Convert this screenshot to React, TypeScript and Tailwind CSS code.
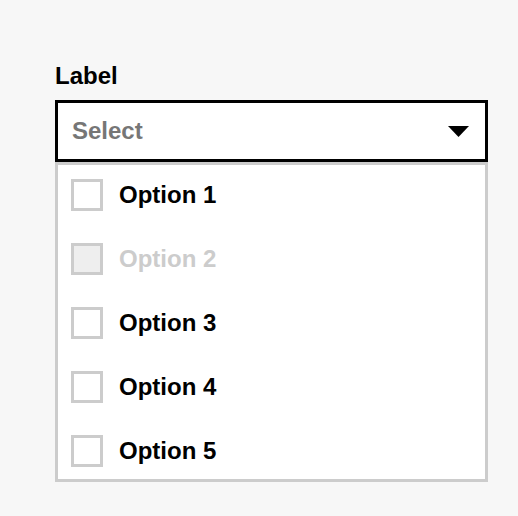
const options = [
  { label: 'Option 1', disabled: false },
  { label: 'Option 2', disabled: true },
  { label: 'Option 3', disabled: false },
  { label: 'Option 4', disabled: false },
  { label: 'Option 5', disabled: false },
];

export default function App() {
  return (
    <div
      className="w-[518px] h-[516px] bg-[#f7f7f7] pt-[62px] pl-[55px]"
      style={{ fontFamily: '"Liberation Sans", Arial, Helvetica, sans-serif' }}
    >
      <div className="w-[433px] flex flex-col">
        {/* Label */}
        <span className="text-[24px] leading-[28px] font-bold text-black mb-[10px]">Label</span>

        {/* Select trigger */}
        <div className="h-[62px] border-[3px] border-black bg-white flex items-center justify-between pl-[14px] pr-[16px]">
          <span className="text-[24px] font-bold text-[#767676]">Select</span>
          <svg width="21" height="11" viewBox="0 0 21 11" className="shrink-0">
            <path d="M0 0 H21 L10.5 11 Z" fill="#000" />
          </svg>
        </div>

        {/* Options list */}
        <div className="border-[3px] border-[#cccccc] bg-white flex flex-col gap-8 pt-[14px] pb-[12px] pl-[13px]">
          {options.map((opt) => (
            <label key={opt.label} className="flex items-center gap-4 h-8">
              <span
                className={`w-8 h-8 shrink-0 border-[3px] border-[#cccccc] ${
                  opt.disabled ? 'bg-[#eeeeee]' : 'bg-white'
                }`}
              />
              <span
                className={`text-[24px] font-bold ${
                  opt.disabled ? 'text-[#cccccc]' : 'text-black'
                }`}
              >
                {opt.label}
              </span>
            </label>
          ))}
        </div>
      </div>
    </div>
  );
}
